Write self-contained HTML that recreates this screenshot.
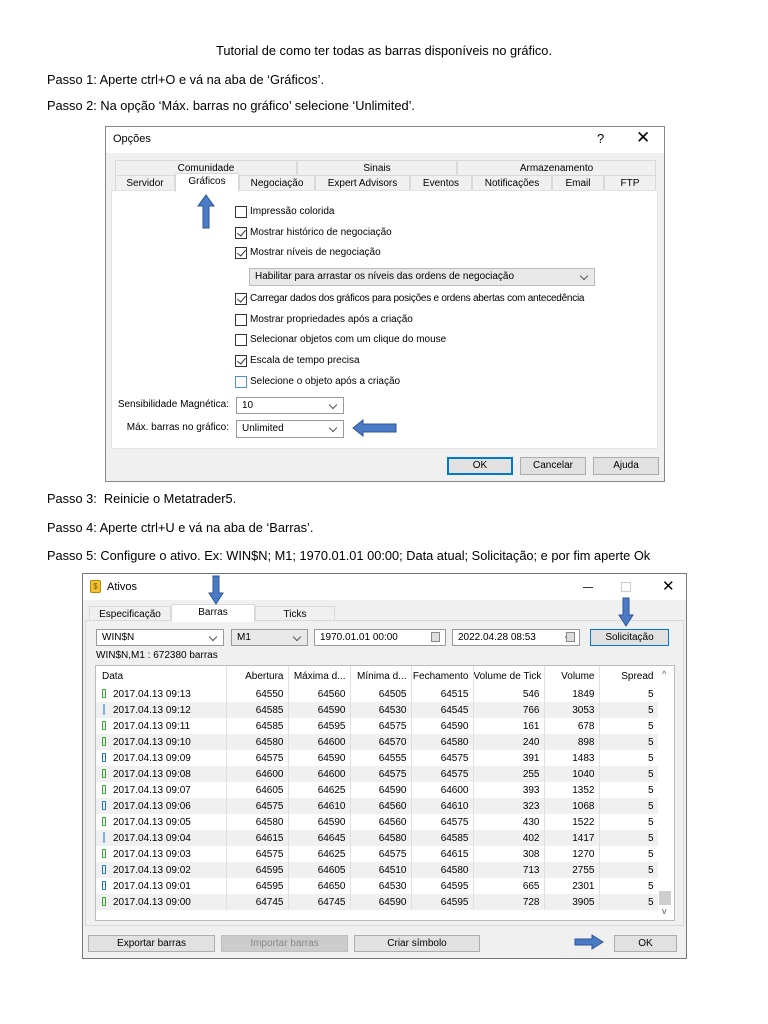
<!DOCTYPE html>
<html><head><meta charset="utf-8"><style>
*{margin:0;padding:0;box-sizing:border-box}
body{width:768px;height:1024px;background:#fff;position:relative;font-family:"Liberation Sans",sans-serif;color:#000;overflow:hidden}
.p{position:absolute;font-size:12.8px;white-space:nowrap}
.a{position:absolute}
.s{font-size:10px;white-space:nowrap;position:absolute}
.tab{position:absolute;background:#f0f0f0;border:1px solid #d9d9d9;font-size:10px;text-align:center;line-height:15px}
.cb{position:absolute;width:12px;height:12px;border:1px solid #333;background:#fff}
.cb.k::after{content:"";position:absolute;left:3px;top:0px;width:4px;height:7px;border:solid #333;border-width:0 1.5px 1.5px 0;transform:rotate(40deg)}
.dd{position:absolute;background:#fff;border:1px solid #999;font-size:10px;line-height:15px;padding-left:5px}
.dd::after{content:"";position:absolute;right:7px;top:4px;width:5px;height:5px;border:solid #555;border-width:0 1px 1px 0;transform:rotate(45deg)}
.btn{position:absolute;background:#e1e1e1;border:1px solid #adadad;font-size:10px;text-align:center}
table{border-collapse:collapse;font-size:10px;table-layout:fixed}
td{height:16px;border-right:1px solid #e0e0e0;text-align:right;padding-right:4px;white-space:nowrap;overflow:hidden}
tr:nth-child(odd) td{background:#f0f0f0}
td:first-child{text-align:left;padding-left:6px}
th{height:20px;font-weight:normal;text-align:right;padding-right:4px;border-right:1px solid #e0e0e0;white-space:nowrap;overflow:hidden}
th:first-child{text-align:left;padding-left:6px}
.g{display:inline-block;width:4px;height:9px;border:1.5px solid #2fa82f;border-radius:1px;margin-right:7px;vertical-align:-1px}
.b{display:inline-block;width:4px;height:9px;border:1.5px solid #1a6fb5;border-radius:1px;margin-right:7px;vertical-align:-1px}
.l{display:inline-block;width:4px;height:11px;margin-right:7px;vertical-align:-2px;background:linear-gradient(90deg,transparent 1.5px,#1a6fb5 1.5px,#1a6fb5 2.5px,transparent 2.5px)}
</style></head><body>
<div class="p" style="left:0;width:768px;text-align:center;top:43px">Tutorial de como ter todas as barras disponíveis no gráfico.</div>
<div class="p" style="left:47px;top:72px">Passo 1: Aperte ctrl+O e vá na aba de ‘Gráficos’.</div>
<div class="p" style="left:47px;top:98px">Passo 2: Na opção ‘Máx. barras no gráfico’ selecione ‘Unlimited’.</div>

<!-- Dialog 1 -->
<div class="a" style="left:105px;top:126px;width:560px;height:356px;background:#f0f0f0;border:1px solid #888"></div>
<div class="a" style="left:106px;top:127px;width:558px;height:26px;background:#fff"></div>
<div class="s" style="left:113px;top:133px;font-size:11px">Opções</div>
<div class="s" style="left:597px;top:131px;font-size:13px">?</div>
<div class="s" style="left:636px;top:128px;font-size:17px">✕</div>
<div class="tab" style="left:115px;top:160px;width:182px">Comunidade</div>
<div class="tab" style="left:297px;top:160px;width:160px">Sinais</div>
<div class="tab" style="left:457px;top:160px;width:199px">Armazenamento</div>
<div class="tab" style="left:115px;top:175px;width:60px">Servidor</div>
<div class="tab" style="left:239px;top:175px;width:76px">Negociação</div>
<div class="tab" style="left:315px;top:175px;width:95px">Expert Advisors</div>
<div class="tab" style="left:410px;top:175px;width:62px">Eventos</div>
<div class="tab" style="left:472px;top:175px;width:80px">Notificações</div>
<div class="tab" style="left:552px;top:175px;width:52px">Email</div>
<div class="tab" style="left:604px;top:175px;width:52px">FTP</div>
<div class="a" style="left:111px;top:190px;width:547px;height:259px;background:#fff;border:1px solid #e3e3e3"></div>
<div class="tab" style="left:175px;top:173px;width:64px;height:19px;background:#fff;border-bottom:none">Gráficos</div>
<svg class="a" style="left:196px;top:194px" width="20" height="36"><path d="M10 1 L18 12 L13 12 L13 34 L7 34 L7 12 L2 12 Z" fill="#4a7bc4" stroke="#2f5597" stroke-width="1"/></svg>

<div class="cb" style="left:235px;top:206px"></div><div class="s" style="left:250px;top:206px">Impressão colorida</div>
<div class="cb k" style="left:235px;top:227px"></div><div class="s" style="left:250px;top:227px">Mostrar histórico de negociação</div>
<div class="cb k" style="left:235px;top:247px"></div><div class="s" style="left:250px;top:247px">Mostrar níveis de negociação</div>
<div class="dd" style="left:249px;top:268px;width:346px;height:18px;background:#e9e9e9;border-color:#bbb">Habilitar para arrastar os níveis das ordens de negociação</div>
<div class="cb k" style="left:235px;top:293px"></div><div class="s" style="left:250px;top:293px;letter-spacing:-0.25px">Carregar dados dos gráficos para posições e ordens abertas com antecedência</div>
<div class="cb" style="left:235px;top:314px"></div><div class="s" style="left:250px;top:314px">Mostrar propriedades após a criação</div>
<div class="cb" style="left:235px;top:334px"></div><div class="s" style="left:250px;top:334px">Selecionar objetos com um clique do mouse</div>
<div class="cb k" style="left:235px;top:355px"></div><div class="s" style="left:250px;top:355px">Escala de tempo precisa</div>
<div class="cb" style="left:235px;top:376px;border-color:#4a90d9"></div><div class="s" style="left:250px;top:376px">Selecione o objeto após a criação</div>
<div class="s" style="left:110px;width:119px;text-align:right;top:399px">Sensibilidade Magnética:</div>
<div class="dd" style="left:236px;top:397px;width:108px;height:17px">10</div>
<div class="s" style="left:110px;width:119px;text-align:right;top:422px">Máx. barras no gráfico:</div>
<div class="dd" style="left:236px;top:420px;width:108px;height:18px">Unlimited</div>
<svg class="a" style="left:352px;top:419px" width="46" height="18"><path d="M1 9 L11 1 L11 5 L44 5 L44 13 L11 13 L11 17 Z" fill="#4a7bc4" stroke="#2f5597"/></svg>
<div class="btn" style="left:447px;top:457px;width:66px;height:18px;line-height:14px;border:2px solid #0078d7">OK</div>
<div class="btn" style="left:520px;top:457px;width:66px;height:18px;line-height:16px">Cancelar</div>
<div class="btn" style="left:593px;top:457px;width:66px;height:18px;line-height:16px">Ajuda</div>

<div class="p" style="left:47px;top:491px">Passo 3:&nbsp; Reinicie o Metatrader5.</div>
<div class="p" style="left:47px;top:520px">Passo 4: Aperte ctrl+U e vá na aba de ‘Barras’.</div>
<div class="p" style="left:47px;top:548px">Passo 5: Configure o ativo. Ex: WIN$N; M1; 1970.01.01 00:00; Data atual; Solicitação; e por fim aperte Ok</div>

<!-- Dialog 2 -->
<div class="a" style="left:82px;top:573px;width:605px;height:386px;background:#f0f0f0;border:1px solid #777"></div>
<div class="a" style="left:83px;top:574px;width:603px;height:26px;background:#fff"></div>
<div class="a" style="left:90px;top:580px;width:11px;height:13px;background:#f2c230;border:1px solid #b8860b;border-radius:2px;font-size:8px;text-align:center;line-height:11px;color:#7a5a00">$</div>
<div class="s" style="left:107px;top:581px;font-size:11px">Ativos</div>
<div class="a" style="left:583px;top:587px;width:10px;height:1px;background:#333"></div>
<div class="a" style="left:621px;top:582px;width:10px;height:10px;border:1px solid #ccc"></div>
<div class="s" style="left:662px;top:577px;font-size:15px">✕</div>
<div class="a" style="left:85px;top:620px;width:599px;height:306px;border:1px solid #d9d9d9;background:#f0f0f0"></div>
<div class="tab" style="left:89px;top:606px;width:82px;height:15px;font-size:10px">Especificação</div>
<div class="tab" style="left:255px;top:606px;width:80px;height:15px;font-size:10px">Ticks</div>
<div class="tab" style="left:171px;top:604px;width:84px;height:18px;background:#fff;border-bottom:none;font-size:10px">Barras</div>
<svg class="a" style="left:208px;top:575px" width="16" height="30"><path d="M5 1 L11 1 L11 18 L15 18 L8 29 L1 18 L5 18 Z" fill="#4a7bc4" stroke="#2f5597"/></svg>
<svg class="a" style="left:618px;top:597px" width="16" height="30"><path d="M5 1 L11 1 L11 18 L15 18 L8 29 L1 18 L5 18 Z" fill="#4a7bc4" stroke="#2f5597"/></svg>
<div class="dd" style="left:96px;top:629px;width:128px;height:17px;font-size:10px">WIN$N</div>
<div class="dd" style="left:231px;top:629px;width:77px;height:17px;font-size:10px;background:#e8e8e8">M1</div>
<div class="dd" style="left:314px;top:629px;width:132px;height:17px;font-size:10px">1970.01.01 00:00</div>
<div class="a" style="left:431px;top:632px;width:9px;height:10px;border:1px solid #888;background:#ddd"></div>
<div class="dd" style="left:452px;top:629px;width:128px;height:17px;font-size:10px">2022.04.28 08:53</div>
<div class="a" style="left:566px;top:632px;width:9px;height:10px;border:1px solid #888;background:#ddd"></div>
<div class="btn" style="left:590px;top:629px;width:79px;height:17px;line-height:15px;border:1px solid #0078d7;font-size:10px">Solicitação</div>
<div class="s" style="left:96px;top:650px;font-size:10px">WIN$N,M1 : 672380 barras</div>
<div class="a" style="left:95px;top:665px;width:580px;height:256px;background:#fff;border:1px solid #bbb;overflow:hidden">
<table style="width:562px">
<colgroup><col style="width:130px"><col style="width:62px"><col style="width:62px"><col style="width:61px"><col style="width:62px"><col style="width:71px"><col style="width:55px"><col style="width:59px"></colgroup>
<tr><th>Data</th><th>Abertura</th><th>Máxima d...</th><th>Mínima d...</th><th>Fechamento</th><th>Volume de Tick</th><th>Volume</th><th>Spread</th></tr>
<tr><td><i class="g"></i>2017.04.13 09:13</td><td>64550</td><td>64560</td><td>64505</td><td>64515</td><td>546</td><td>1849</td><td>5</td></tr>
<tr><td><i class="l"></i>2017.04.13 09:12</td><td>64585</td><td>64590</td><td>64530</td><td>64545</td><td>766</td><td>3053</td><td>5</td></tr>
<tr><td><i class="g"></i>2017.04.13 09:11</td><td>64585</td><td>64595</td><td>64575</td><td>64590</td><td>161</td><td>678</td><td>5</td></tr>
<tr><td><i class="g"></i>2017.04.13 09:10</td><td>64580</td><td>64600</td><td>64570</td><td>64580</td><td>240</td><td>898</td><td>5</td></tr>
<tr><td><i class="b"></i>2017.04.13 09:09</td><td>64575</td><td>64590</td><td>64555</td><td>64575</td><td>391</td><td>1483</td><td>5</td></tr>
<tr><td><i class="g"></i>2017.04.13 09:08</td><td>64600</td><td>64600</td><td>64575</td><td>64575</td><td>255</td><td>1040</td><td>5</td></tr>
<tr><td><i class="g"></i>2017.04.13 09:07</td><td>64605</td><td>64625</td><td>64590</td><td>64600</td><td>393</td><td>1352</td><td>5</td></tr>
<tr><td><i class="b"></i>2017.04.13 09:06</td><td>64575</td><td>64610</td><td>64560</td><td>64610</td><td>323</td><td>1068</td><td>5</td></tr>
<tr><td><i class="g"></i>2017.04.13 09:05</td><td>64580</td><td>64590</td><td>64560</td><td>64575</td><td>430</td><td>1522</td><td>5</td></tr>
<tr><td><i class="l"></i>2017.04.13 09:04</td><td>64615</td><td>64645</td><td>64580</td><td>64585</td><td>402</td><td>1417</td><td>5</td></tr>
<tr><td><i class="g"></i>2017.04.13 09:03</td><td>64575</td><td>64625</td><td>64575</td><td>64615</td><td>308</td><td>1270</td><td>5</td></tr>
<tr><td><i class="b"></i>2017.04.13 09:02</td><td>64595</td><td>64605</td><td>64510</td><td>64580</td><td>713</td><td>2755</td><td>5</td></tr>
<tr><td><i class="b"></i>2017.04.13 09:01</td><td>64595</td><td>64650</td><td>64530</td><td>64595</td><td>665</td><td>2301</td><td>5</td></tr>
<tr><td><i class="g"></i>2017.04.13 09:00</td><td>64745</td><td>64745</td><td>64590</td><td>64595</td><td>728</td><td>3905</td><td>5</td></tr>
</table>
<div class="a" style="left:562px;top:0;width:16px;height:254px;background:#fff"></div>
<div class="s" style="left:566px;top:3px;font-size:9px;color:#555">^</div>
<div class="a" style="left:563px;top:225px;width:12px;height:14px;background:#cdcdcd"></div>
<div class="s" style="left:566px;top:240px;font-size:9px;color:#555">v</div>
</div>
<div class="btn" style="left:88px;top:935px;width:127px;height:17px;line-height:15px;font-size:10px">Exportar barras</div>
<div class="btn" style="left:221px;top:935px;width:127px;height:17px;line-height:15px;font-size:10px;background:#ccc;border-color:#bfbfbf;color:#888">Importar barras</div>
<div class="btn" style="left:354px;top:935px;width:126px;height:17px;line-height:15px;font-size:10px">Criar símbolo</div>
<svg class="a" style="left:574px;top:934px" width="30" height="16"><path d="M1 5 L18 5 L18 1 L29 8 L18 15 L18 11 L1 11 Z" fill="#4a7bc4" stroke="#2f5597"/></svg>
<div class="btn" style="left:614px;top:935px;width:63px;height:17px;line-height:15px;font-size:10px">OK</div>
</body></html>
